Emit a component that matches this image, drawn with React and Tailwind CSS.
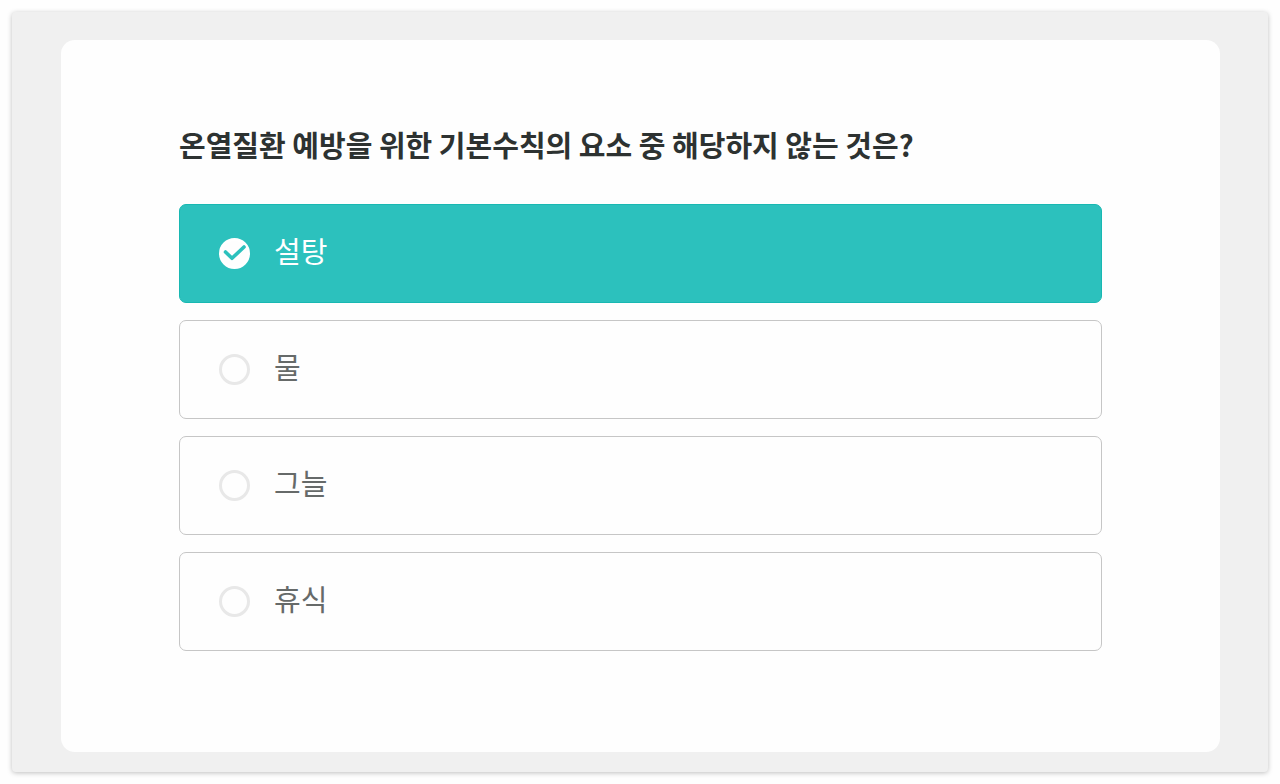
import { useState } from 'react';
import clsx from 'clsx';

const question = '온열질환 예방을 위한 기본수칙의 요소 중 해당하지 않는 것은?';
const options = ['설탕', '물', '그늘', '휴식'];

const Option = ({ label, checked, onSelect }) => (
  <label
    className={clsx(
      'flex h-[99px] cursor-pointer items-center gap-6 rounded-[7px] border px-[39px] pb-px',
      checked ? 'border-[#18b8b2] bg-[#2cc1bd] text-white' : 'border-[#c6c6c6] bg-[#fefefe] text-[#666a69]'
    )}
  >
    <span className="relative h-[31px] w-[31px] shrink-0">
      <input
        type="radio"
        name="answer"
        value={label}
        checked={checked}
        onChange={() => onSelect(label)}
        className="block h-[31px] w-[31px] cursor-pointer appearance-none rounded-full border-[3px] border-[#e8e8e8] bg-[#fefefe] checked:border-white"
      />
      {checked && (
        <svg viewBox="0 0 31 31" className="pointer-events-none absolute inset-0 h-[31px] w-[31px]" fill="none" aria-hidden="true">
          <path d="M6.5 14 L13 20.3 L25 9" stroke="#2cc1bd" strokeWidth="3.6" strokeLinejoin="round" strokeLinecap="round" />
        </svg>
      )}
    </span>
    <span className="pb-1.5 text-[29px] leading-10">{label}</span>
  </label>
);

const App = () => {
  const [answer, setAnswer] = useState(options[0]);

  return (
    <div className="min-h-screen bg-[#fefefe] p-3 font-['Noto_Sans_CJK_KR',sans-serif]">
      <main className="rounded-sm bg-[#f0f0f0] pt-7 pr-12 pb-5 pl-[49px] shadow-[0_1px_5px_rgba(0,0,0,0.25)]">
        <form className="rounded-[14px] bg-[#fefefe] px-[118px] pt-[82px] pb-[101px]">
          <fieldset>
            <legend className="mb-[38px] text-[29px] leading-[44px] font-bold text-[#2d3231]">{question}</legend>
            <div className="flex flex-col gap-[17px]">
              {options.map((o) => (
                <Option key={o} label={o} checked={answer === o} onSelect={setAnswer} />
              ))}
            </div>
          </fieldset>
        </form>
      </main>
    </div>
  );
};

export default App;
